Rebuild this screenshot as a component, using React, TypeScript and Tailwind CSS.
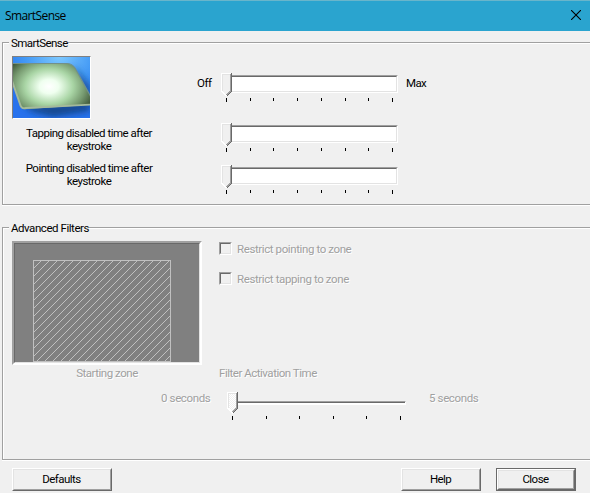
import React from "react";

const W11 = "font-['Roboto',Arial,sans-serif] text-[11.5px] leading-[13px] whitespace-nowrap";

function Thumb({ disabled = false }: { disabled?: boolean }) {
  const h = disabled ? 22 : 24;
  const s = h - 6;
  return (
    <svg className="absolute left-0 top-0" width="11" height={h} shapeRendering="crispEdges">
      <defs>
        <pattern id="dither" width="2" height="2" patternUnits="userSpaceOnUse">
          <rect width="2" height="2" fill="#f0f0f0" />
          <rect width="1" height="1" fill="#fff" />
          <rect x="1" y="1" width="1" height="1" fill="#fff" />
        </pattern>
      </defs>
      <path d={`M0 0H11V${s + 1}L6 ${h}H5L0 ${s + 1}Z`} fill={disabled ? "url(#dither)" : "#f0f0f0"} />
      <path d={`M1.5 ${s}V1.5H9`} fill="none" stroke="#e3e3e3" />
      <path d={`M0.5 ${s}V0.5H10M0.5 ${s}L5.5 ${h - 1}`} fill="none" stroke="#fff" />
      <path d={`M9.5 1V${s}L5.5 ${h - 2}`} fill="none" stroke="#a0a0a0" />
      <path d={`M10.5 0V${s + 0.5}L5.5 ${h - 0.5}`} fill="none" stroke="#696969" />
    </svg>
  );
}

function Ticks({ at }: { at: number[] }) {
  return (
    <svg className="block" width="180" height="4" shapeRendering="crispEdges">
      {at.map((x, i) => (
        <rect key={x} x={x} y="0" width="1" height={i === 0 || i === at.length - 1 ? 4 : 3} fill="#000" />
      ))}
    </svg>
  );
}

function Slider() {
  return (
    <div className="relative w-[180px] h-[29px] pt-[2px]">
      <div className="w-[176px] ml-px h-[18px] border border-t-[#a0a0a0] border-l-[#a0a0a0] border-b-white border-r-white">
        <div className="h-full bg-white border border-t-[#696969] border-l-[#696969] border-b-[#e3e3e3] border-r-[#e3e3e3]" />
      </div>
      <div className="mt-[5px]"><Ticks at={[5, 29, 52, 76, 100, 124, 147, 171]} /></div>
      <Thumb />
    </div>
  );
}

function Group({ title, className, titleClass, children }: { title: string; className: string; titleClass: string; children: React.ReactNode }) {
  return (
    <section className={`ml-[2px] w-[588px] border-l border-y border-[#a0a0a0] shadow-[inset_1px_1px_0_#fff,0_1px_0_#fff] ${className}`}>
      <h2 className={`${W11} w-fit -mt-[6px] ml-[6px] pl-[2px] h-[13px] bg-[#f0f0f0] text-black ${titleClass}`}>{title}</h2>
      {children}
    </section>
  );
}

function Check({ label, spacing }: { label: string; spacing: string }) {
  return (
    <label className="flex h-[13px]">
      <span className="size-[13px] border border-t-[#a0a0a0] border-l-[#a0a0a0] border-b-white border-r-white">
        <span className="block size-[11px] border border-t-[#696969] border-l-[#696969] border-b-[#e3e3e3] border-r-[#e3e3e3]" />
      </span>
      <span className={`${W11} ml-[5px] mt-px text-[#a0a0a0] [text-shadow:1px_1px_#fff] ${spacing}`}>{label}</span>
    </label>
  );
}

function Button({ children, className }: { children: string; className: string }) {
  return (
    <button className={`h-[23px] border border-t-white border-l-white border-b-[#696969] border-r-[#696969] ${className}`}>
      <span className={`${W11} flex h-full items-center justify-center border border-t-[#e3e3e3] border-l-[#e3e3e3] border-b-[#a0a0a0] border-r-[#a0a0a0] pr-px`}>{children}</span>
    </button>
  );
}

function TouchpadPicture() {
  return (
    <svg className="block" width="77" height="61">
      <defs>
        <radialGradient id="sky" cx=".6" cy="0" r=".8"><stop offset="0" stopColor="#7cc8ff" /><stop offset=".55" stopColor="#4399f5" /><stop offset="1" stopColor="#2872ed" /></radialGradient>
        <radialGradient id="pad" gradientUnits="userSpaceOnUse" cx="36" cy="29" r="48" gradientTransform="translate(0 8) scale(1 .74)"><stop offset="0" stopColor="#fff" /><stop offset=".2" stopColor="#efffef" /><stop offset=".5" stopColor="#a9d5a5" /><stop offset=".75" stopColor="#76996f" /><stop offset="1" stopColor="#384f33" /></radialGradient>
        <filter id="soft"><feGaussianBlur stdDeviation="3" /></filter>
      </defs>
      <rect width="77" height="61" fill="url(#sky)" />
      <path d="M10 49L77 45V54L40 60L20 55ZM60 7L77 30V45Z" fill="#174a91" filter="url(#soft)" />
      <path d="M-2 6.5H54Q59 7 62 11L79 42V48L14 52Q9 53 7 48L-2 21Z" fill="url(#pad)" />
      <path d="M-2 21L7 47Q8 52 13 51L79 47.5" fill="none" stroke="#a4b99b" strokeWidth="1.9" />
      <path d="M0 6.5H54Q59 6.5 62 11L79 42" fill="none" stroke="#72908a" strokeWidth="1.2" />
    </svg>
  );
}

export default function App() {
  return (
    <main className="w-[590px] h-[493px] overflow-hidden bg-[#f0f0f0]">
      <header className="h-[31px] border-t border-[#69b5cb] bg-[#2aa4cf] flex justify-between pl-[5px] pr-[9px]">
        <h1 className="font-['Open_Sans','Noto_Sans',sans-serif] text-[12px] leading-[16px] mt-[7px] tracking-[-0.6px]">SmartSense</h1>
        <svg className="mt-[9px]" width="10" height="10" viewBox="0 0 10 10"><path d="M0 0L10 10M10 0L0 10" stroke="#000" strokeWidth="1.1" /></svg>
      </header>
      <Group title="SmartSense" className="mt-[11px] h-[163px]" titleClass="w-[61px] tracking-[-0.57px]">
        <div className="flex pl-[9px] mt-[6px]">
          <div className="w-[154px]">
            <div className="w-[79px] h-[63px] border border-t-[#808080] border-l-[#808080] border-b-white border-r-white"><TouchpadPicture /></div>
            <p className={`${W11} mt-[8px] text-center tracking-[-0.51px]`}>Tapping disabled time after<br />keystroke</p>
            <p className={`${W11} mt-[9px] text-center tracking-[-0.51px]`}>Pointing disabled time after<br />keystroke</p>
          </div>
          <div className={`${W11} w-[55px] pl-[31px] pt-[21px] tracking-[-0.5px]`}>Off</div>
          <div className="pt-[17px]">
            <Slider />
            <div className="mt-[21px]"><Slider /></div>
            <div className="mt-[13px]"><Slider /></div>
          </div>
          <div className={`${W11} pl-[5px] pt-[21px] tracking-[-0.6px]`}>Max</div>
        </div>
      </Group>
      <Group title="Advanced Filters" className="mt-[22px] h-[233px]" titleClass="w-[84px] tracking-[-0.45px]">
        <div className="flex pl-[9px] mt-[6px]">
          <div className="w-[190px]">
            <div className="w-[190px] h-[124px] border-2 border-t-[#a0a0a0] border-l-[#a0a0a0] border-b-white border-r-white">
              <div className="h-full border border-t-[#696969] border-l-[#696969] border-b-[#e3e3e3] border-r-[#e3e3e3] bg-[#808080] pt-[16px] pl-[18px]">
                <svg className="block" width="138" height="102" shapeRendering="crispEdges">
                  <defs><pattern id="hatch" x="1" width="8" height="8" patternUnits="userSpaceOnUse">{[0, 1, 2, 3, 4, 5, 6, 7].map((i) => <rect key={i} x={i} y={7 - i} width="1" height="1" fill="#c0c0c0" />)}</pattern></defs>
                  <rect width="138" height="102" fill="url(#hatch)" />
                  <rect x=".5" y=".5" width="137" height="101" fill="none" stroke="#c0c0c0" />
                </svg>
              </div>
            </div>
            <p className={`${W11} mt-[2px] text-center text-[#a0a0a0] [text-shadow:1px_1px_#fff] tracking-[-0.48px]`}>Starting zone</p>
          </div>
          <div className="ml-[17px] pt-px">
            <Check label="Restrict pointing to zone" spacing="tracking-[-0.4px]" />
            <div className="mt-[17px]"><Check label="Restrict tapping to zone" spacing="tracking-[-0.39px]" /></div>
            <p className={`${W11} mt-[82px] text-[#a0a0a0] [text-shadow:1px_1px_#fff] tracking-[-0.48px]`}>Filter Activation Time</p>
          </div>
        </div>
        <div className="flex text-[#a0a0a0] [text-shadow:1px_1px_#fff] mt-[12px] pl-[158px]">
          <span className={`${W11} w-[66px] tracking-[-0.37px]`}>0 seconds</span>
          <div className="relative w-[180px] h-[28px] pt-[9px]">
            <div className="w-[179px] h-[4px] border border-t-[#a0a0a0] border-l-[#a0a0a0] border-b-white border-r-white"><div className="h-[2px] border-t border-[#696969] bg-white" /></div>
            <div className="mt-[11px]"><Ticks at={[5, 39, 72, 106, 139, 173]} /></div>
            <Thumb disabled />
          </div>
          <span className={`${W11} ml-[22px] tracking-[-0.37px]`}>5 seconds</span>
        </div>
      </Group>
      <footer className="flex mt-[8px] pl-[12px]">
        <Button className="w-[100px] tracking-[-0.55px]">Defaults</Button>
        <Button className="w-[80px] ml-[289px] tracking-[-0.6px]">Help</Button>
        <div className="ml-[15px] w-[80px] h-[23px] border border-[#696969] flex"><Button className="w-[78px] !h-[21px] tracking-[-0.55px]">Close</Button></div>
      </footer>
    </main>
  );
}
